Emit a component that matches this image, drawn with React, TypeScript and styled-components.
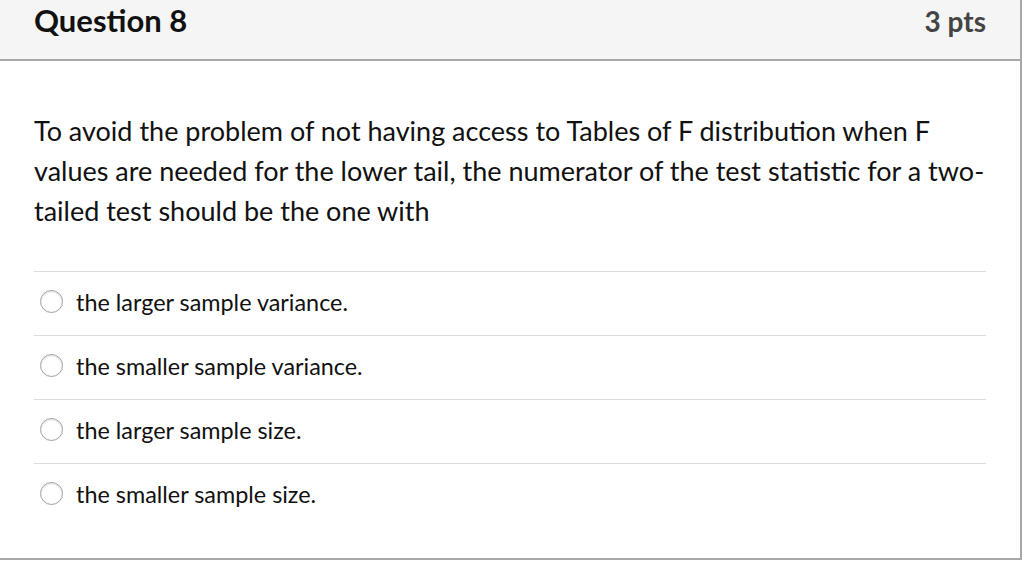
import React from 'react';
import styled, { createGlobalStyle } from 'styled-components';

const GlobalStyle = createGlobalStyle`
    html, body {
        margin: 0;
        padding: 0;
        background: #ffffff;
    }
    body {
        font-family: Lato, "Open Sans", "Liberation Sans", sans-serif;
        color: #111;
    }
`;

const Card = styled.div`
    width: 1020px;
    border-right: 2px solid #a8a8a8;
    border-bottom: 2px solid #a8a8a8;
    background: #fff;
`;

const Header = styled.div`
    box-sizing: border-box;
    height: 61px;
    display: flex;
    justify-content: space-between;
    align-items: baseline;
    padding: 2px 34px 0;
    background: #f5f5f5;
    border-bottom: 2px solid #a8a8a8;
`;

const Title = styled.h2`
    margin: 0;
    font-size: 31px;
    line-height: 37px;
    font-weight: 700;
    color: #111;
`;

const Points = styled.div`
    font-size: 28px;
    line-height: 37px;
    font-weight: 700;
    color: #444;
`;

const Body = styled.div`
    padding: 50px 34px 31px;
`;

const Prompt = styled.p`
    margin: 0 0 40px;
    font-size: 27px;
    line-height: 40px;
    color: #111;
`;

const Answers = styled.div`
    display: flex;
    flex-direction: column;
`;

const Answer = styled.label`
    display: flex;
    align-items: center;
    gap: 13px;
    box-sizing: border-box;
    height: 64px;
    padding: 0 0 4px 6px;
    border-top: 1px solid #dcdcdc;
    font-size: 23.4px;
    color: #111;
`;

const Radio = styled.span`
    width: 21px;
    height: 21px;
    border-radius: 50%;
    border: 1px solid #a0a0a0;
    background: #fff;
    box-shadow: inset 0 1px 2px rgba(0, 0, 0, 0.12);
    flex-shrink: 0;
`;

const options = [
    'the larger sample variance.',
    'the smaller sample variance.',
    'the larger sample size.',
    'the smaller sample size.',
];

export default function App() {
    return (
        <>
            <GlobalStyle />
            <Card>
                <Header>
                    <Title>Question 8</Title>
                    <Points>3 pts</Points>
                </Header>
                <Body>
                    <Prompt>
                        To avoid the problem of not having access to Tables of F distribution when F
                        values are needed for the lower tail, the numerator of the test statistic for a
                        two-tailed test should be the one with
                    </Prompt>
                    <Answers>
                        {options.map((o) => (
                            <Answer key={o}>
                                <Radio />
                                {o}
                            </Answer>
                        ))}
                    </Answers>
                </Body>
            </Card>
        </>
    );
}
